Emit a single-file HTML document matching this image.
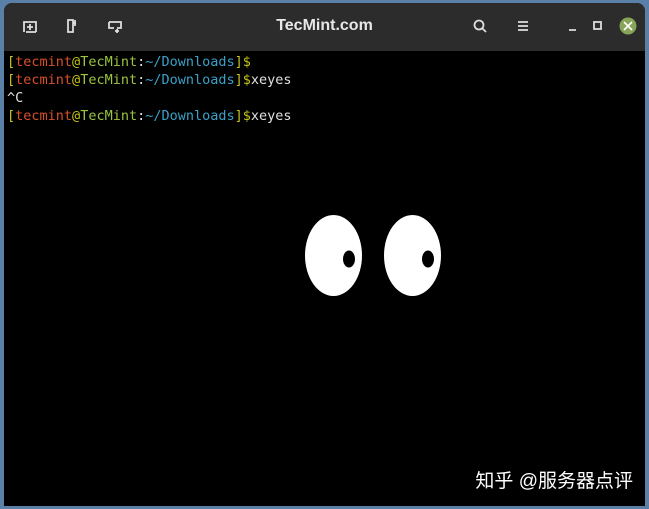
<!DOCTYPE html>
<html><head><meta charset="utf-8"><style>
html,body{margin:0;padding:0;width:649px;height:509px;overflow:hidden;background:#5b80a8}
.win{position:absolute;left:4px;top:3px;width:641px;height:503px;background:#000;border-radius:8px 8px 0 0;overflow:hidden}
.tb{position:absolute;left:0;top:0;width:641px;height:48px;background:#2c2c2c}
.title{position:absolute;left:0;width:641px;top:14px;text-align:center;color:#e8e8e8;font:bold 16px "Liberation Sans",sans-serif}
.term{position:absolute;left:3px;top:50px;font:13.5px "DejaVu Sans Mono","Liberation Mono",monospace;line-height:18px;color:#e0e0e0;white-space:pre}
.y{color:#c4c41a}.r{color:#d8502a}.g{color:#9bc53d}.b{color:#3aa0c8}
.wm{position:absolute;right:12px;bottom:13px;color:#fff;font:19px "Liberation Sans","Noto Sans CJK SC",sans-serif}
</style></head><body>
<div class="win">
<div class="tb">
<svg width="641" height="48" style="position:absolute;left:0;top:0">
<g stroke="#ddd" stroke-width="1.8" fill="none">
<path d="M20 29V19h12v10M22 29h10M26 21v6M23 24h6"/>
<path d="M64 17h5v12h-5zM69 20h3M71 17v6"/>
<path d="M105 19h12v6h-4M105 19v6h5M113 26v4M111 28h4"/>
<circle cx="475" cy="22" r="4.5"/><path d="M478 25l4 4"/>
<path d="M514 19h10M514 23h10M514 27h10"/>
<path d="M565 27h7"/>
<rect x="590" y="19" width="7" height="7"/>
</g>
<circle cx="624" cy="23" r="8.5" fill="#87a556"/>
<path d="M620 19l8 8M628 19l-8 8" stroke="#fff" stroke-width="1.6"/>
</svg>
<div class="title">TecMint.com</div>
</div>
<div class="term"><span class="y">[</span><span class="r">tecmint</span><span class="y">@</span><span class="g">TecMint</span>:<span class="b">~/Downloads</span><span class="y">]$</span>
<span class="y">[</span><span class="r">tecmint</span><span class="y">@</span><span class="g">TecMint</span>:<span class="b">~/Downloads</span><span class="y">]$</span>xeyes
^C
<span class="y">[</span><span class="r">tecmint</span><span class="y">@</span><span class="g">TecMint</span>:<span class="b">~/Downloads</span><span class="y">]$</span>xeyes</div>
<svg width="641" height="503" style="position:absolute;left:0;top:0">
<ellipse cx="329.5" cy="252.5" rx="28.5" ry="40.5" fill="#fff"/>
<ellipse cx="408.5" cy="252.5" rx="28.5" ry="40.5" fill="#fff"/>
<ellipse cx="345" cy="256" rx="6" ry="8.5" fill="#000"/>
<ellipse cx="424" cy="256" rx="6" ry="8.5" fill="#000"/>
</svg>
<div class="wm">知乎 @服务器点评</div>
</div>
</body></html>
